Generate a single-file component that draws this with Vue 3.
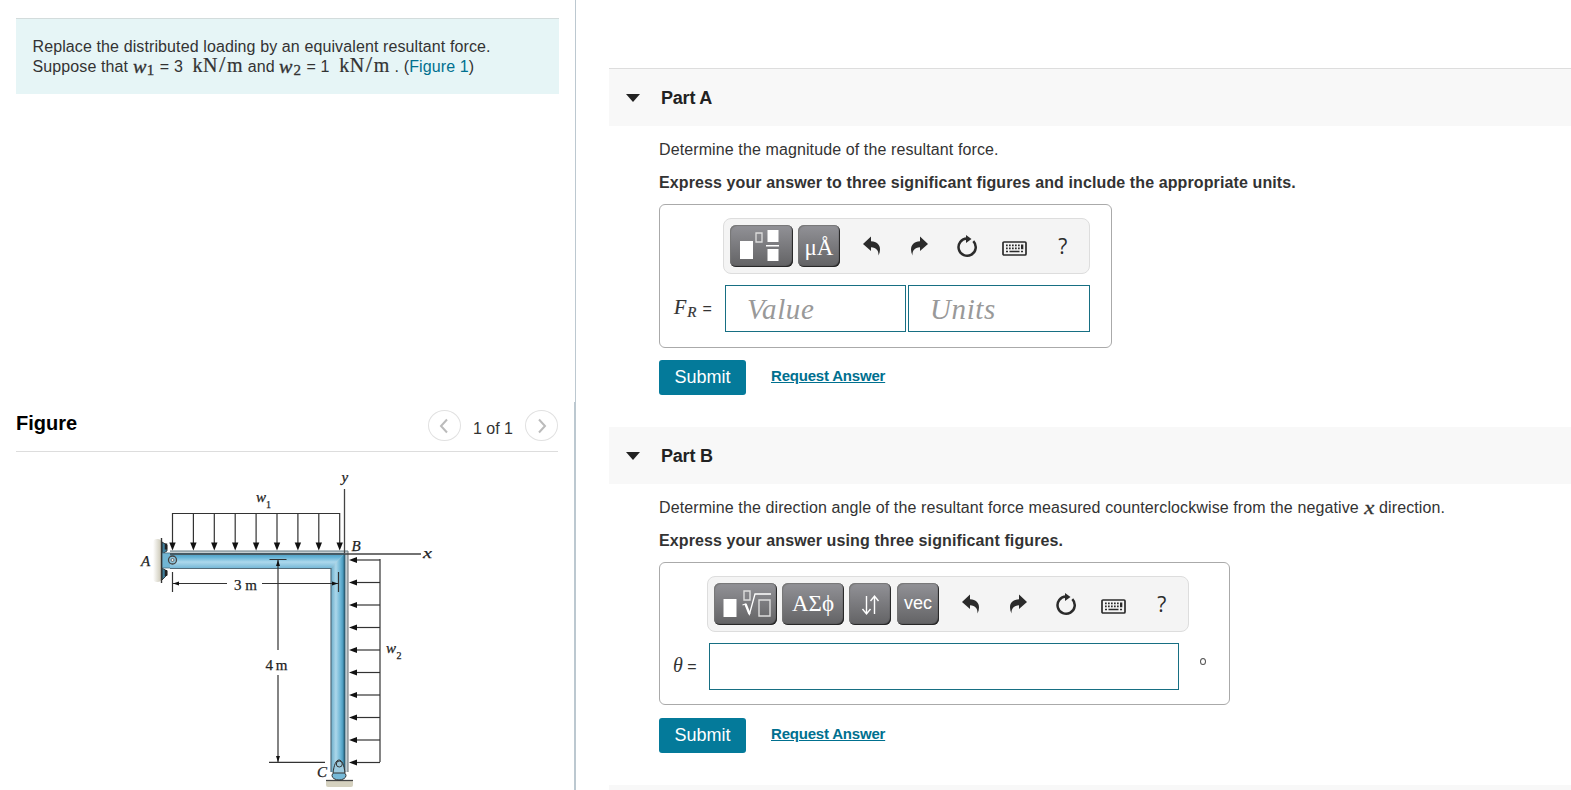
<template>
    <main class="page">
        <aside class="left">
            <div class="problem">
                <p>Replace the distributed loading by an equivalent resultant force.</p>
                <p class="given">
                    Suppose that <span class="math w"><i>w</i><sub>1</sub></span> = 3 <span class="unit first">kN<i>/</i>m</span>
                    and <span class="math w"><i>w</i><sub>2</sub></span> = 1 <span class="unit">kN<i>/</i>m</span> . (<a href="#">Figure 1</a>)
                </p>
            </div>

            <section class="figure">
                <header class="figure-head">
                    <h2>Figure</h2>
                    <div class="pager">
                        <button class="round"><svg width="12" height="16" viewBox="0 0 12 16"><path d="M9 1.5 3 8l6 6.5" /></svg></button>
                        <span>1 of 1</span>
                        <button class="round"><svg width="12" height="16" viewBox="0 0 12 16"><path d="M3 1.5 9 8l-6 6.5" /></svg></button>
                    </div>
                </header>

                <svg class="diagram" width="320" height="325" viewBox="130 465 320 325">
                    <defs>
                        <linearGradient id="beamH" x1="0" y1="0" x2="0" y2="1">
                            <stop offset="0" stop-color="#4597bd" />
                            <stop offset=".3" stop-color="#69b6d8" />
                            <stop offset=".6" stop-color="#add8ec" />
                            <stop offset="1" stop-color="#77b9d8" />
                        </linearGradient>
                        <linearGradient id="beamV" x1="0" y1="0" x2="1" y2="0">
                            <stop offset="0" stop-color="#69acc9" />
                            <stop offset=".35" stop-color="#acd7ea" />
                            <stop offset=".7" stop-color="#67b3d4" />
                            <stop offset="1" stop-color="#2f83a8" />
                        </linearGradient>
                        <linearGradient id="wall" x1="0" y1="0" x2="1" y2="0">
                            <stop offset="0" stop-color="#fff" />
                            <stop offset="1" stop-color="#c9c5b3" />
                        </linearGradient>
                    </defs>

                    <!-- wall and pin at A -->
                    <rect x="153" y="539" width="8.500" height="43" rx="4" fill="url(#wall)" />
                    <path d="M162 542l5 3v6l-5 3zM162 568l5 3v4l-5 5z" fill="#3f7f9c" stroke="#222" stroke-width=".8" />
                    <path d="M166 543.500v6M166 570v6" stroke="#222" stroke-width="2.500" />
                    <rect x="162" y="553" width="9" height="15" fill="#71b5d3" stroke="#4c7183" stroke-width=".8" />
                    <path d="M161.500 538v45" stroke="#333" stroke-width="1.400" />

                    <!-- beam -->
                    <path d="M170 551h178v221h-17V568H170z" fill="#c4ced2" />
                    <path d="M170 553h175l-14 15H170z" fill="url(#beamH)" />
                    <path d="M345 553v219h-14V568z" fill="url(#beamV)" />
                    <path d="M170 568.500h161V772" fill="none" stroke="#526b7a" stroke-width="1.200" />
                    <path d="M344.500 554v218" stroke="#2c6077" stroke-width="1.600" />
                    <path d="M348 551v221" stroke="#686f72" />
                    <path d="M170 551h178" stroke="#687e86" />
                    <circle cx="172.500" cy="560" r="4" fill="#8ec4dc" stroke="#444" stroke-width="1.300" />
                    <circle cx="172.500" cy="560" r="1.500" fill="#eee" stroke="#444" stroke-width=".7" />

                    <!-- axes -->
                    <path d="M344.500 489v64M170 554h251" stroke="#444" stroke-width="1.300" />

                    <!-- load w1 -->
                    <path d="M172 513.500h168" stroke="#333" stroke-width="1.200" />
                    <g v-for="x in topArrows" :key="x">
                        <path :d="`M${x} 513v31`" stroke="#333" stroke-width="1.200" />
                        <path :d="`M${x - 3.2} 542.500h6.400l-3.200 8z`" fill="#111" />
                    </g>

                    <!-- load w2 -->
                    <path d="M380 559v203" stroke="#333" stroke-width="1.200" />
                    <g v-for="y in sideArrows" :key="y">
                        <path :d="`M380 ${y}h-27`" stroke="#333" stroke-width="1.200" />
                        <path :d="`M357 ${y - 3}v6l-8-3z`" fill="#111" />
                    </g>

                    <!-- dimensions -->
                    <g stroke="#333" stroke-width="1.200">
                        <path d="M172.500 572v20M338.500 572v20M173 583.500h54M262 583.500h76M269.500 559.500h17M278 560v90M278 675v87M269 762.300h56" />
                    </g>
                    <path d="M173 583.500l6-2v4zM338 583.500l-6-2v4zM278 560l-2 6h4zM278 762l-2-6h4z" fill="#111" />

                    <!-- roller at C -->
                    <rect x="326" y="780" width="27" height="7" rx="2" fill="#d5d1bf" />
                    <path d="M326 780.500h27" stroke="#444" stroke-width="1.300" />
                    <ellipse cx="339" cy="775.500" rx="7" ry="4.500" fill="#76b9d8" stroke="#333" />
                    <path d="M333 773c1-8 3-13 6-13s5 5 6 13z" fill="#9ccbe0" stroke="#333" />
                    <circle cx="339.300" cy="764" r="3" fill="#9bc7da" stroke="#333" />

                    <g class="labels">
                        <text x="341.500" y="482" class="it">y</text>
                        <text x="423" y="558" class="it" textLength="9" lengthAdjust="spacingAndGlyphs">x</text>
                        <text x="351.500" y="551" class="it">B</text>
                        <text x="141" y="566" class="it">A</text>
                        <text x="317" y="777" class="it">C</text>
                        <text x="256" y="502" class="it">w</text>
                        <text x="266" y="508" class="small">1</text>
                        <text x="386" y="653" class="it">w</text>
                        <text x="396.500" y="659" class="small">2</text>
                        <text x="234" y="590" textLength="23">3 m</text>
                        <text x="265.500" y="670" textLength="22">4 m</text>
                    </g>
                </svg>
            </section>
        </aside>

        <div class="right">
            <section v-for="part in parts" :key="part.id" class="part" :class="'part-' + part.id">
                <header class="part-head">
                    <span class="caret"></span>
                    <h3>Part {{ part.id }}</h3>
                </header>
                <div class="part-body">
                    <p>{{ part.question }}<template v-if="part.id === 'B'">&nbsp;<span class="math x">x</span> direction.</template></p>
                    <p class="express">{{ part.express }}</p>

                    <div class="answer">
                        <div class="toolbar">
                            <template v-if="part.id === 'A'">
                                <button class="tool wide">
                                    <svg width="63" height="42" viewBox="0 0 63 42">
                                        <path d="M10 16h13v18H10zM37.500 5h11v12h-11zM37.500 24h11v12h-11zM36 20h13v1.500H36z" fill="#fff" />
                                        <path d="M26 8h6v9h-6z" fill="none" stroke="#ddd" stroke-width="1.300" />
                                    </svg>
                                </button>
                                <button class="tool serif">μÅ</button>
                            </template>
                            <template v-else>
                                <button class="tool wide">
                                    <svg width="63" height="42" viewBox="0 0 63 42">
                                        <path d="M9.500 16h13v18h-13z" fill="#fff" />
                                        <path d="M30 8h6v9h-6zM45 17h11v16H45z" fill="none" stroke="#ddd" stroke-width="1.400" />
                                        <path d="M28.500 22l3-1 4 10 5.500-20H57" fill="none" stroke="#fff" stroke-width="1.300" />
                                        <path d="M31.500 21l4 10" stroke="#fff" stroke-width="2.300" />
                                    </svg>
                                </button>
                                <button class="tool wide serif greek">ΑΣϕ</button>
                                <button class="tool">
                                    <svg width="42" height="42" viewBox="0 0 42 42">
                                        <path d="M17.500 13v18M13.500 26l4 5 4-5M25.500 31V13M21.500 18l4-5 4 5" fill="none" stroke="#fff" stroke-width="1.400" />
                                    </svg>
                                </button>
                                <button class="tool vec">vec</button>
                            </template>

                            <span class="icon">
                                <svg width="18" height="20" viewBox="0 0 18 20">
                                    <path d="M0 8 8 .5v4.700c6 .6 9 3.400 9 8.300 0 2-.5 4-1.500 6 .2-5-2-7.800-7.500-8.200V15z" />
                                </svg>
                            </span>
                            <span class="icon">
                                <svg width="18" height="20" viewBox="0 0 18 20">
                                    <path d="M18 8 10 .5v4.700c-6 .6-9 3.400-9 8.300 0 2 .5 4 1.500 6-.2-5 2-7.800 7.500-8.200V15z" />
                                </svg>
                            </span>
                            <span class="icon">
                                <svg width="22" height="24" viewBox="0 0 22 24">
                                    <path d="M17.300 7.200A8.600 8.600 0 1 1 11 4.600" fill="none" stroke="#2b2b2b" stroke-width="2.500" />
                                    <path d="M10 1 15.500 5 10 9z" />
                                </svg>
                            </span>
                            <span class="icon keyboard">
                                <svg width="25" height="15" viewBox="0 0 25 15">
                                    <rect x="1" y="1" width="23" height="13" rx="1" fill="none" stroke="#2b2b2b" stroke-width="1.700" />
                                    <path d="M4 4.300h14M4 7.300h15" fill="none" stroke="#2b2b2b" stroke-width="1.700" stroke-dasharray="1.700 1.300" />
                                    <path d="M19 3.500h2.300v4.700H19zM4 9.800h2v1.500H4zM7.500 9.800h10v1.500h-10zM19 9.800h2v1.500h-2z" />
                                </svg>
                            </span>
                            <span class="icon help">?</span>
                        </div>

                        <div class="entry">
                            <template v-if="part.id === 'A'">
                                <label><span class="math">F<sub>R</sub></span> =</label>
                                <input v-model="value" class="value" placeholder="Value" />
                                <input v-model="units" class="units" placeholder="Units" />
                            </template>
                            <template v-else>
                                <label><span class="math">θ</span> =</label>
                                <input v-model="theta" class="theta" />
                                <span class="degree"></span>
                            </template>
                        </div>
                    </div>

                    <div class="actions">
                        <button class="submit">Submit</button>
                        <a href="#">Request Answer</a>
                    </div>
                </div>
            </section>
            <div class="next-part"></div>
        </div>
    </main>
</template>

<script setup>
import { ref, computed } from 'vue';

const value = ref('');
const units = ref('');
const theta = ref('');

const parts = [
    {
        id: 'A',
        question: 'Determine the magnitude of the resultant force.',
        express: 'Express your answer to three significant figures and include the appropriate units.'
    },
    {
        id: 'B',
        question: 'Determine the direction angle of the resultant force measured counterclockwise from the negative',
        express: 'Express your answer using three significant figures.'
    }
];

// evenly spaced load arrows
const topArrows = computed(() => Array.from({ length: 9 }, (_, i) => 172.5 + i * 20.9));
const sideArrows = computed(() => Array.from({ length: 10 }, (_, i) => 560 + i * 22.5));
</script>

<style>
body {
    margin: 0;
    background: #fff;
    overflow: hidden;
}
</style>

<style scoped>
* {
    box-sizing: border-box;
}

.page {
    display: flex;
    width: 1571px;
    height: 790px;
    overflow: hidden;
    font: 16px/20px "Liberation Sans", Arial, sans-serif;
    color: #333;
}

p, h2, h3 {
    margin: 0;
}

p {
    letter-spacing: .11px;
}

button {
    padding: 0;
    border: 0;
    font-family: inherit;
}

.left {
    display: flex;
    flex-direction: column;
    flex: none;
    width: 576px;
    padding: 18px 0 0 16px;
    border-right: 1px solid #bcc8d0;
}

.problem {
    width: 543px;
    height: 76px;
    padding: 18px 16px 0 16.5px;
    border-top: 1px solid #d3dcdc;
    background: #e6f5f6;
    white-space: nowrap;
}

.given {
    height: 20px;
}

a {
    color: #00708f;
    text-decoration: none;
}

.math {
    font-family: "Liberation Serif", serif;
    font-style: italic;
    font-size: 20px;
    line-height: 0;
}

sub {
    font-size: 15px;
    line-height: 0;
    vertical-align: -3px;
}

.w {
    margin-right: 1px;
    -webkit-text-stroke: .3px #333;
}

.w i {
    display: inline-block;
    width: 14px;
    font-size: 18px;
    transform: translateY(1px) scaleX(1.12);
    transform-origin: left;
}

.w sub {
    font-style: normal;
}

.unit {
    margin-left: 5px;
    font: 20px/0 "Liberation Serif", serif;
    letter-spacing: .6px;
    -webkit-text-stroke: .2px #333;
}

.unit i {
    margin: 0 1px;
    font-size: 23px;
    font-style: normal;
}

.figure {
    margin-top: 308px;
    width: 559px;
    height: 388px;
    border-right: 1px solid #bcc8d0;
}

.figure-head {
    display: flex;
    justify-content: space-between;
    width: 542px;
    height: 50px;
    border-bottom: 1px solid #ddd;
}

h2 {
    margin-top: 9px;
    font-size: 20px;
    line-height: 24px;
    color: #000;
}

.pager {
    display: flex;
    align-items: center;
    gap: 12px;
    height: 33px;
    margin-top: 7px;
}

.pager span {
    padding-top: 6px;
}

.round {
    display: flex;
    align-items: center;
    justify-content: center;
    width: 33px;
    height: 31px;
    border: 1px solid #e1e1e1;
    border-radius: 50%;
    background: #fff;
}

.round path {
    fill: none;
    stroke: #bbb;
    stroke-width: 2;
}

.diagram {
    display: block;
    margin: 13px 0 0 114px;
}

.labels {
    font: 15px "Liberation Serif", serif;
    fill: #222;
    stroke: #222;
    stroke-width: .25px;
}

.labels .it {
    font-style: italic;
}

.labels .small {
    font-size: 10px;
}

.right {
    flex: 1;
    padding: 68px 0 0 33px;
}

.part {
    height: 359px;
}

.part-head {
    display: flex;
    align-items: center;
    height: 58px;
    padding-left: 17px;
    border-top: 1px solid #ddd;
    background: #f8f8f8;
}

.part-B .part-head {
    height: 57px;
    border-top: 0;
}

.caret {
    border: 7px solid transparent;
    border-top: 8px solid #222;
    border-bottom: 0;
}

h3 {
    margin-left: 21px;
    font-size: 18px;
    letter-spacing: -.2px;
    color: #222;
}

.part-body {
    padding: 14px 0 0 50px;
    white-space: nowrap;
}

.part-body .x {
    display: inline-block;
    margin: 0 1.3px;
    font-size: 19px;
    transform: translateY(.5px) scaleX(1.2);
    -webkit-text-stroke: .3px #333;
}

.express {
    margin-top: 13px;
    font-weight: bold;
}

.answer {
    display: flex;
    flex-direction: column;
    width: 453px;
    height: 144px;
    margin-top: 11px;
    padding: 13px 0 0 63px;
    border: 1px solid #aaa;
    border-radius: 6px;
}

.part-B .answer {
    width: 571px;
    height: 143px;
    padding-left: 47px;
}

.toolbar {
    display: flex;
    align-items: center;
    gap: 5px;
    width: 367px;
    height: 56px;
    padding-left: 6px;
    border: 1px solid #ddd;
    border-radius: 8px;
    background: #f4f4f4;
}

.part-B .toolbar {
    width: 482px;
}

.tool {
    flex: none;
    width: 42px;
    height: 42px;
    border-radius: 6px;
    background: linear-gradient(#929297, #626264);
    box-shadow: inset -1px -1px 1px #222, inset 1px 1px 1px #777;
    color: #fff;
    font-size: 18px;
}

.tool svg {
    display: block;
}

.tool.wide {
    width: 63px;
}

.part-B .tool.greek {
    width: 62px;
}

.serif {
    padding-top: 4px;
    font-family: "Liberation Serif", serif;
    font-size: 23px;
    line-height: 38px;
}

.greek {
    padding-top: 0;
}

.part-B .vec {
    margin-left: 1px;
    padding-bottom: 2px;
}

.icon {
    display: flex;
    align-items: center;
    justify-content: center;
    width: 43px;
    margin-right: -.2px;
    fill: #2b2b2b;
    color: #2b2b2b;
}

.keyboard {
    padding-top: 5px;
}

.tool + .icon {
    margin-left: 5px;
}

.help {
    font-family: "Open Sans", sans-serif;
    font-size: 21px;
}

.entry {
    display: flex;
    align-items: center;
    gap: 2px;
    margin: 11px 0 0 -50px;
}

label {
    flex: none;
    width: 50px;
    padding-left: 1px;
}

.part-A label {
    letter-spacing: .9px;
}

.part-A label .math {
    -webkit-text-stroke: .2px #333;
}

.part-B .entry {
    margin-left: -35px;
}

.part-B label {
    width: 35px;
}

input {
    width: 181px;
    height: 47px;
    padding: 1px 21px 0;
    border: 1px solid #176f83;
    outline: 0;
    font: italic 29px "Liberation Serif", serif;
    letter-spacing: .6px;
}

.units {
    width: 182px;
}

input::placeholder {
    color: #999;
    opacity: 1;
}

.theta {
    width: 470px;
}

.degree {
    width: 6px;
    height: 7px;
    margin: -10px 0 0 19px;
    border: 1px solid #555;
    border-radius: 50%;
}

.actions {
    display: flex;
    align-items: center;
    gap: 25px;
    margin-top: 12px;
}

.part-B .actions {
    margin-top: 13px;
}

.submit {
    width: 87px;
    height: 35px;
    border-radius: 3px;
    background: #047a9a;
    color: #fff;
    font-size: 18px;
}

.actions a {
    margin-top: -3px;
    font-size: 15px;
    font-weight: bold;
    letter-spacing: -.2px;
    text-decoration: underline;
}

.next-part {
    height: 20px;
    margin-top: -1px;
    background: #f8f8f8;
}
</style>
